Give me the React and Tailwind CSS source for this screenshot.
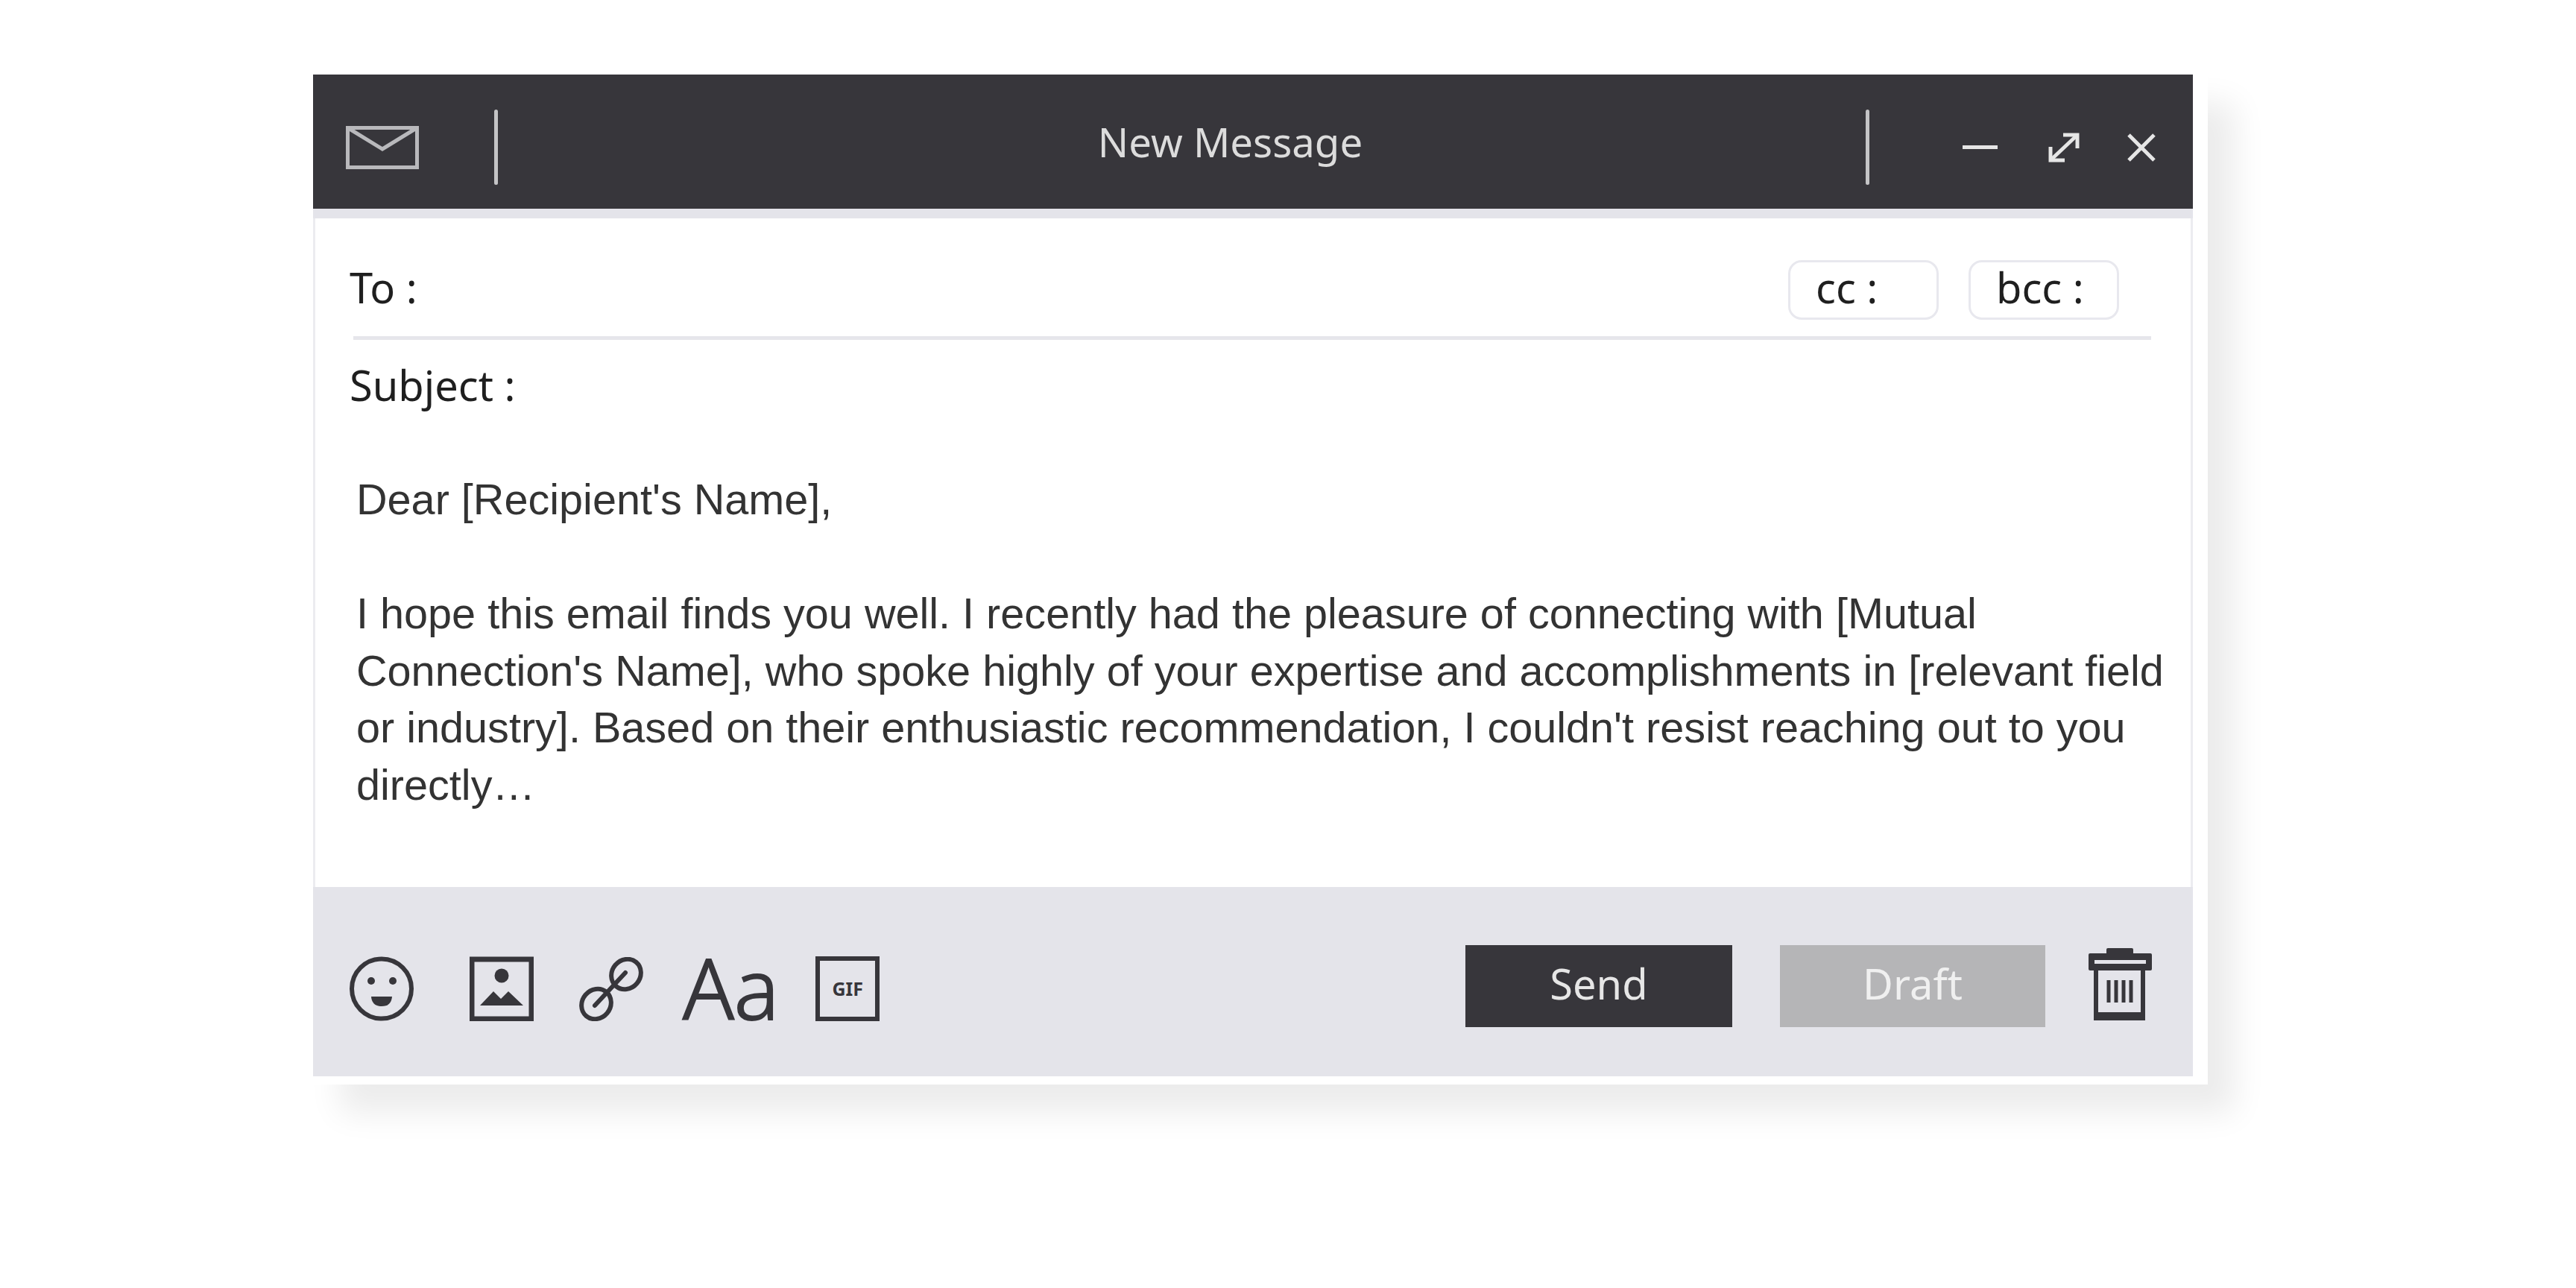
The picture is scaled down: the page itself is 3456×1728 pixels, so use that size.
const noto = { fontFamily: '"Noto Sans", sans-serif' }

function Envelope() {
  return (
    <svg width="98" height="58" viewBox="0 0 98 58" fill="none" stroke="#b9b9bc" strokeWidth="5">
      <rect x="2.5" y="2.5" width="93" height="53" />
      <path d="M5 4 L49 31 L93 4" />
    </svg>
  )
}

function Divider() {
  return <div className="h-[101px] w-[5px] rounded-full bg-[#c4c4c6]" />
}

function Expand() {
  return (
    <svg width="42" height="40" viewBox="0 0 42 40" fill="none" stroke="#e6e6e6" strokeWidth="5">
      <path d="M4 36 L38 4" />
      <path d="M20 3 H39 V21" />
      <path d="M3 19 V37 H22" />
    </svg>
  )
}

function Close() {
  return (
    <svg width="38" height="38" viewBox="0 0 38 38" fill="none" stroke="#e6e6e6" strokeWidth="5">
      <path d="M2 2 L36 36 M36 2 L2 36" />
    </svg>
  )
}

function Smiley() {
  return (
    <svg width="86" height="87" viewBox="0 0 86 87" fill="none">
      <circle cx="43" cy="43.5" r="40" stroke="#37363b" strokeWidth="6" />
      <circle cx="29" cy="33" r="5" fill="#37363b" />
      <circle cx="58" cy="33" r="5" fill="#37363b" />
      <path d="M29 54 H57 Q56 67 43 67 Q30 67 29 54 Z" fill="#37363b" />
    </svg>
  )
}

function ImageIcon() {
  return (
    <svg width="86" height="87" viewBox="0 0 86 87" fill="none">
      <rect x="3" y="4" width="80" height="80" stroke="#37363b" strokeWidth="7" />
      <circle cx="43" cy="26" r="9.5" fill="#37363b" />
      <path d="M14 66 L32 47 L42 57 L52 47 L72 66 Z" fill="#37363b" />
    </svg>
  )
}

function LinkIcon() {
  return (
    <svg width="86" height="86" viewBox="0 0 86 86" fill="none" stroke="#37363b" strokeWidth="6">
      <ellipse cx="23" cy="63" rx="19" ry="21" transform="rotate(40 23 63)" />
      <ellipse cx="63" cy="23" rx="19" ry="21" transform="rotate(40 63 23)" />
      <path d="M21 65 L62 21" strokeLinecap="round" />
    </svg>
  )
}

function Trash() {
  return (
    <svg width="85" height="97" viewBox="0 0 85 97" fill="none">
      <rect x="24" y="0" width="36" height="10" rx="2" fill="#37363b" />
      <rect x="0" y="7" width="85" height="23" rx="2" fill="#37363b" />
      <rect x="8" y="16" width="69" height="5" fill="#e4e4ea" />
      <path d="M10 29 V94 H73 V29" stroke="#37363b" strokeWidth="6" />
      <rect x="10" y="86" width="63" height="9" fill="#37363b" />
      <path d="M27 43 V73 M37 43 V73 M47 43 V73 M57 43 V73" stroke="#37363b" strokeWidth="5" />
    </svg>
  )
}

export default function App() {
  return (
    <div className="h-[1728px] w-[3456px] bg-white pl-[420px] pt-[100px]" style={noto}>
      <div className="flex h-[1355px] w-[2542px] flex-col bg-white pb-[11px] pr-[20px] shadow-[36px_38px_40px_rgba(0,0,0,0.08)]">
        <header className="flex h-[180px] items-center bg-[#37363b] pl-[44px] pr-[50px] pt-[15px] text-[#e6e6e6]">
          <Envelope />
          <div className="ml-[101px]">
            <Divider />
          </div>
          <div className="flex-1 pb-[15px] pl-[130px] text-center text-[54.5px] leading-none text-[#dcdcdc]">New Message</div>
          <Divider />
          <div className="ml-[125px] h-[5px] w-[47px] bg-[#e6e6e6]" />
          <div className="ml-[68px]">
            <Expand />
          </div>
          <div className="ml-[64px]">
            <Close />
          </div>
        </header>
        <div className="h-[13px] bg-[#e4e4ea]" />

        <div className="flex-1 border-x-[3px] border-[#ececf0] text-[#1f1f1f]">
          <div className="flex h-[158px] items-center pb-[23px] pl-[46px] pr-[96px] pt-[57px] text-[56px]">
            <span className="flex-1 pb-[8px] leading-none">To :</span>
            <span className="flex h-[80px] w-[202px] items-center rounded-[18px] border-[3px] border-[#e8e8ee] pb-[8px] pl-[34px] leading-none">cc :</span>
            <span className="ml-[40px] flex h-[80px] w-[202px] items-center rounded-[18px] border-[3px] border-[#e8e8ee] pb-[8px] pl-[34px] leading-none">bcc :</span>
          </div>
          <div className="ml-[51px] mr-[53px] h-[5px] bg-[#e6e6eb]" />
          <div className="flex h-[120px] items-center pl-[46px] text-[56px] leading-none">Subject :</div>
          <div
            className="ml-[55px] mt-[56px] w-[2440px] text-[57.6px] leading-[76.5px] text-[#333333]"
            style={{ fontFamily: '"Liberation Sans", Arial, sans-serif' }}
          >
            <p>Dear [Recipient's Name],</p>
            <p className="mt-[76.5px]">
              I hope this email finds you well. I recently had the pleasure of connecting with [Mutual Connection's Name], who spoke highly of your expertise and accomplishments in [relevant field or industry]. Based on their enthusiastic recommendation, I couldn't resist reaching out to you directly…
            </p>
          </div>
        </div>

        <footer className="flex h-[254px] items-start bg-[#e4e4ea] pl-[49px] pr-[55px] pt-[78px] text-[#37363b]">
          <div className="mt-[15px] flex items-center">
            <Smiley />
            <div className="ml-[75px]">
              <ImageIcon />
            </div>
            <div className="ml-[61px]">
              <LinkIcon />
            </div>
            <span className="ml-[53px] h-[87px] text-[113px] font-light leading-[83px] [-webkit-text-stroke:2px_#37363b]">Aa</span>
            <div className="ml-[49px] flex h-[87px] w-[86px] items-center justify-center border-[6px] border-[#37363b] text-[25px] font-bold leading-none">
              GIF
            </div>
          </div>
          <button className="ml-auto flex h-[110px] w-[358px] items-center justify-center bg-[#37363b] pb-[8px] text-[56px] leading-none text-[#e6e6e6]">
            Send
          </button>
          <button className="ml-[64px] flex h-[110px] w-[356px] items-center justify-center bg-[#b5b5b7] pb-[8px] text-[56px] leading-none text-[#f0f0f0]">
            Draft
          </button>
          <div className="ml-[58px] mt-[4px]">
            <Trash />
          </div>
        </footer>
      </div>
    </div>
  )
}
